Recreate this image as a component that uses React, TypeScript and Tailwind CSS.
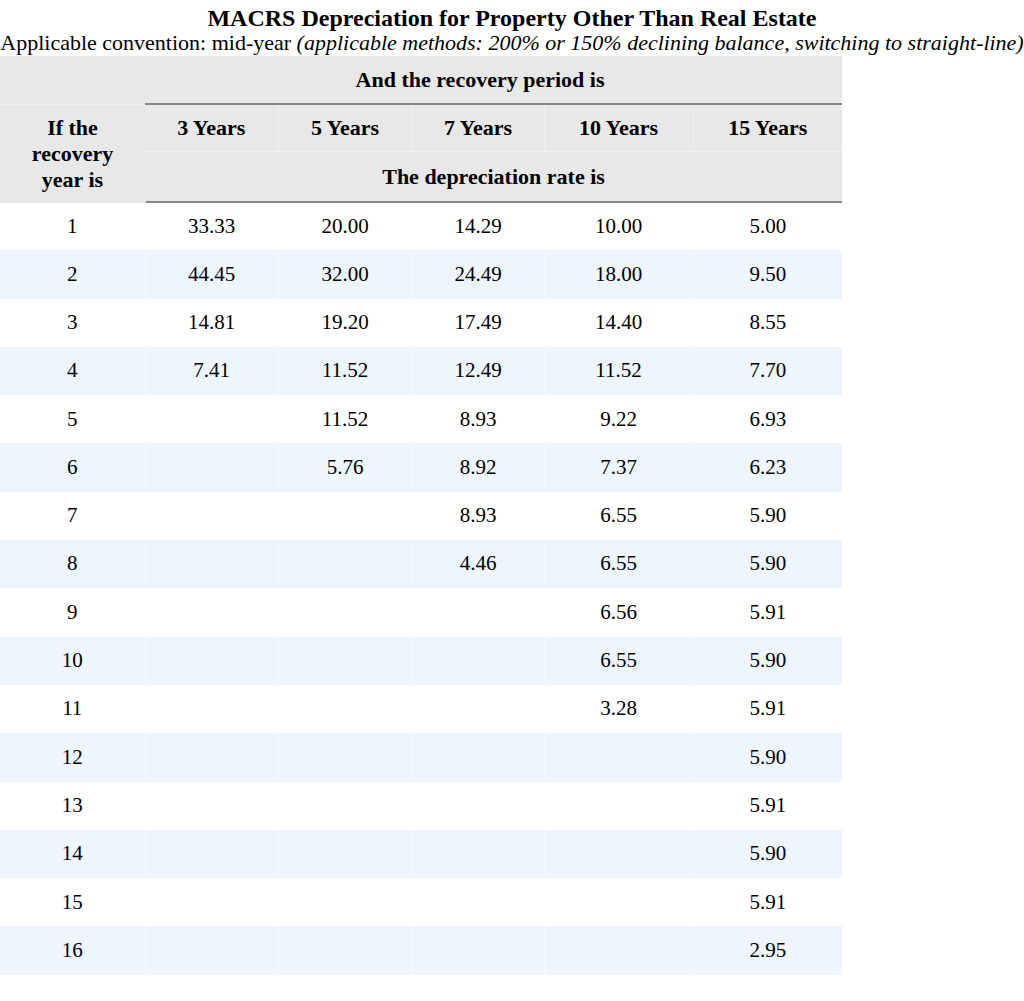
import React from "react";

const years = ["3 Years", "5 Years", "7 Years", "10 Years", "15 Years"];

// rates by recovery year, one entry per recovery period column
const rows: string[][] = [
  ["33.33", "20.00", "14.29", "10.00", "5.00"],
  ["44.45", "32.00", "24.49", "18.00", "9.50"],
  ["14.81", "19.20", "17.49", "14.40", "8.55"],
  ["7.41", "11.52", "12.49", "11.52", "7.70"],
  ["", "11.52", "8.93", "9.22", "6.93"],
  ["", "5.76", "8.92", "7.37", "6.23"],
  ["", "", "8.93", "6.55", "5.90"],
  ["", "", "4.46", "6.55", "5.90"],
  ["", "", "", "6.56", "5.91"],
  ["", "", "", "6.55", "5.90"],
  ["", "", "", "3.28", "5.91"],
  ["", "", "", "", "5.90"],
  ["", "", "", "", "5.91"],
  ["", "", "", "", "5.90"],
  ["", "", "", "", "5.91"],
  ["", "", "", "", "2.95"],
];

const App = () => {
  return (
    <div className="w-[1024px] min-h-[1001px] bg-white text-black font-['Liberation_Serif',serif]">
      <div className="pt-[5px] text-center">
        <h1 className="text-[24px] leading-[26px] font-bold">
          MACRS Depreciation for Property Other Than Real Estate
        </h1>
        <p className="text-[22px] leading-[24px] whitespace-nowrap">
          Applicable convention: mid-year{" "}
          <i>(applicable methods: 200% or 150% declining balance, switching to straight-line)</i>
        </p>
      </div>

      <table className="mt-[1px] w-[842px] table-fixed border-collapse">
        <colgroup>
          <col className="w-[145px]" />
          <col className="w-[133px]" />
          <col className="w-[134px]" />
          <col className="w-[132px]" />
          <col className="w-[149px]" />
          <col className="w-[149px]" />
        </colgroup>
        <thead className="bg-[#e8e8e8] font-bold text-[22px]">
          <tr className="h-[48px]">
            <th className="border-b border-[#f2f2f2]" />
            <th colSpan={5} className="border-b-2 border-[#888] pr-[27px] text-center align-middle">
              And the recovery period is
            </th>
          </tr>
          <tr className="h-[47px]">
            <th rowSpan={2} className="pt-[2px] text-center align-middle leading-[26px] border-b-2 border-[#e8e8e8]">
              If the
              <br />
              recovery
              <br />
              year is
            </th>
            {years.map((y, i) => (
              <th
                key={y}
                className={
                  "text-center align-middle border-b border-[#f2f2f2] " +
                  (i > 0 ? "border-l border-l-[#efefef]" : "")
                }
              >
                {y}
              </th>
            ))}
          </tr>
          <tr className="h-[51px]">
            <th colSpan={5} className="border-b-2 border-[#888] text-center align-middle">
              The depreciation rate is
            </th>
          </tr>
        </thead>
        <tbody className="text-[21px]">
          {rows.map((r, idx) => (
            <tr key={idx} className={"h-[48.3px] " + (idx % 2 === 1 ? "bg-[#eef5fc]" : "bg-white")}>
              <td className="text-center align-middle">{idx + 1}</td>
              {r.map((v, j) => (
                <td key={j} className="text-center align-middle border-l border-l-white/60">
                  {v}
                </td>
              ))}
            </tr>
          ))}
        </tbody>
      </table>
    </div>
  );
};

export default App;
